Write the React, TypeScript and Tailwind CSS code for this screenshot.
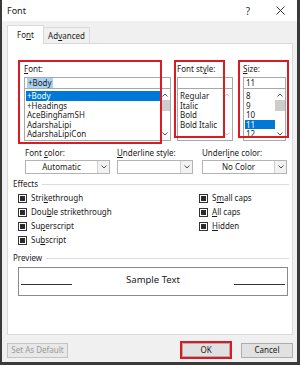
import React from "react";

const U = ({ children }: { children: React.ReactNode }) => (
  <span className="underline underline-offset-[1px] decoration-[0.5px]">{children}</span>
);

function Chev({ up, faded }: { up?: boolean; faded?: boolean }) {
  return (
    <svg width="6" height="4" viewBox="0 0 6 4" className="block">
      <polyline
        points={up ? "0.5,3.5 3,1 5.5,3.5" : "0.5,0.5 3,3 5.5,0.5"}
        fill="none"
        stroke={faded ? "#c8c8c8" : "#505050"}
        strokeWidth="1"
      />
    </svg>
  );
}

function Scroll({ thumb, faded }: { thumb?: boolean; faded?: boolean }) {
  return (
    <div className="w-[10px] h-full flex flex-col items-center justify-between py-[4px] bg-white">
      <Chev up faded={faded} />
      <div className="flex-1 w-full pt-[3px]">
        {thumb ? <div className="w-full h-[11px] bg-[#cdcdcd]" /> : null}
      </div>
      <Chev faded={faded} />
    </div>
  );
}

function Check({ children }: { children: React.ReactNode }) {
  return (
    <div className="h-[14px] flex items-center gap-[4px]">
      <div className="w-[9px] h-[9px] border border-[#333] bg-white flex items-center justify-center">
        <div className="w-[5px] h-[5px] bg-[#2a2a2a]" />
      </div>
      <span>{children}</span>
    </div>
  );
}

function Drop({ text, w }: { text: string; w: string }) {
  return (
    <div className={`${w} h-[14px] border border-[#b4b4b4] bg-white flex`}>
      <div className="flex-1 flex items-center justify-center">{text}</div>
      <div className="w-[12px] h-full border-l border-[#d0d0d0] bg-[#f2f2f2] flex items-center justify-center">
        <Chev />
      </div>
    </div>
  );
}

export default function App() {
  return (
    <div className="w-[300px] h-[365px] bg-[#f0f0f0] border-l-2 border-r-[3px] border-b-[3px] border-[#3a3a3a] flex flex-col text-[8px] leading-[10px] text-[#1a1a1a] font-['Noto_Sans',sans-serif] overflow-hidden">
      {/* title bar */}
      <div className="h-[21px] bg-white flex items-center pl-[5px] pr-[12px] shrink-0">
        <span className="text-[9px]">Font</span>
        <span className="ml-auto text-[10px] text-[#333] mr-[26px]">?</span>
        <svg width="9" height="9" viewBox="0 0 9 9">
          <path d="M0.5 0.5 L8.5 8.5 M8.5 0.5 L0.5 8.5" stroke="#333" strokeWidth="1" />
        </svg>
      </div>
      {/* tabs */}
      <div className="h-[22px] flex items-end pl-[5px] shrink-0">
        <div className="h-[19px] w-[37px] bg-white border border-b-0 border-[#d9d9d9] flex items-center justify-center relative z-10 -mb-px">
          Fo<U>n</U>t
        </div>
        <div className="h-[16px] w-[46px] bg-[#f0f0f0] border border-l-0 border-b-0 border-[#d9d9d9] flex items-center justify-center">
          Ad<U>v</U>anced
        </div>
      </div>
      {/* panel */}
      <div className="ml-[5px] w-[286px] h-[292px] bg-white border border-[#d9d9d9] relative shrink-0 pt-[20px]">
        {/* top lists */}
        <div className="flex pl-[16px]">
          <div className="w-[147px] flex flex-col">
            <div className="h-[10px]"><U>F</U>ont:</div>
            <div className="mt-[3px] h-[12px] border border-[#a8a8a8] flex items-center px-[2px]">
              <span className="bg-[#a9d1f3] px-[1px]">+Body</span>
            </div>
            <div className="h-[52px] border border-t-0 border-[#a8a8a8] flex leading-[9px]">
              <div className="flex-1 pt-[2px] pl-[1px]">
                <div className="h-[9.5px] bg-[#0078d7] text-white flex items-center px-[1px]">+Body</div>
                <div className="h-[9.5px] flex items-center px-[1px]">+Headings</div>
                <div className="h-[9.5px] flex items-center px-[1px]">AceBinghamSH</div>
                <div className="h-[9.5px] flex items-center px-[1px]">AdarshaLipi</div>
                <div className="h-[9.5px] flex items-center px-[1px]">AdarshaLipiCon</div>
              </div>
              <Scroll thumb />
            </div>
          </div>
          <div className="w-[56px] flex flex-col ml-[6px]">
            <div className="h-[10px]">Font st<U>y</U>le:</div>
            <div className="mt-[3px] h-[12px] border border-[#a8a8a8]" />
            <div className="h-[52px] border border-t-0 border-[#a8a8a8] flex leading-[9px]">
              <div className="flex-1 pt-[2px] pl-[2px]">
                <div className="h-[9.5px] flex items-center">Regular</div>
                <div className="h-[9.5px] flex items-center">Italic</div>
                <div className="h-[9.5px] flex items-center">Bold</div>
                <div className="h-[9.5px] flex items-center">Bold Italic</div>
              </div>
              <Scroll faded />
            </div>
          </div>
          <div className="w-[43px] flex flex-col ml-[10px]">
            <div className="h-[10px]"><U>S</U>ize:</div>
            <div className="mt-[3px] h-[12px] border border-[#a8a8a8] flex items-center px-[2px]">11</div>
            <div className="h-[52px] border border-t-0 border-[#a8a8a8] flex leading-[9px]">
              <div className="flex-1 pt-[2px] pl-[1px]">
                <div className="h-[9.5px] flex items-center px-[1px]">8</div>
                <div className="h-[9.5px] flex items-center px-[1px]">9</div>
                <div className="h-[9.5px] flex items-center px-[1px]">10</div>
                <div className="h-[9.5px] flex items-center px-[1px] bg-[#0078d7] text-white">11</div>
                <div className="h-[9.5px] flex items-center px-[1px]">12</div>
              </div>
              <Scroll thumb />
            </div>
          </div>
        </div>

        {/* colour row */}
        <div className="flex mt-[7px] pl-[17px]">
          <div className="flex flex-col gap-[2px] w-[85px]">
            <div>Font <U>c</U>olor:</div>
            <Drop text="Automatic" w="w-[85px]" />
          </div>
          <div className="flex flex-col gap-[2px] w-[76px] ml-[7px]">
            <div><U>U</U>nderline style:</div>
            <Drop text="" w="w-[76px]" />
          </div>
          <div className="flex flex-col gap-[2px] w-[85px] ml-[9px]">
            <div>Underl<U>i</U>ne color:</div>
            <Drop text="No Color" w="w-[85px]" />
          </div>
        </div>

        {/* effects */}
        <div className="mt-[5px] pl-[5px] pr-[3px] flex items-center h-[10px]">
          <span>Effects</span>
          <div className="flex-1 h-px bg-[#dcdcdc] ml-[4px]" />
        </div>
        <div className="mt-[2px] pl-[10px] flex">
          <div className="w-[181px] flex flex-col">
            <Check>Stri<U>k</U>ethrough</Check>
            <Check>Dou<U>b</U>le strikethrough</Check>
            <Check>Su<U>p</U>erscript</Check>
            <Check>Su<U>b</U>script</Check>
          </div>
          <div className="flex flex-col">
            <Check>S<U>m</U>all caps</Check>
            <Check><U>A</U>ll caps</Check>
            <Check><U>H</U>idden</Check>
          </div>
        </div>

        {/* preview */}
        <div className="mt-[6px] pl-[5px] pr-[3px] flex items-center h-[10px]">
          <span>Preview</span>
          <div className="flex-1 h-px bg-[#dcdcdc] ml-[4px]" />
        </div>
        <div className="mt-[4px] ml-[10px] w-[270px] h-[29px] border border-[#8a8a8a] flex items-end pb-[10px] px-[2px]">
          <div className="w-[51px] h-px bg-[#333]" />
          <div className="flex-1 text-center text-[9.5px] leading-[12px] -mb-[1px]">Sample Text</div>
          <div className="w-[51px] h-px bg-[#333]" />
        </div>

        {/* red annotation overlays */}
        <div className="absolute left-[10px] top-[16px] w-[144px] h-[84px] border-2 border-[#d91c24] pointer-events-none" />
        <div className="absolute left-[166px] top-[16px] w-[51px] h-[78px] border-2 border-[#d91c24] pointer-events-none" />
        <div className="absolute left-[230px] top-[16px] w-[51px] h-[78px] border-2 border-[#d91c24] pointer-events-none" />
      </div>

      {/* buttons */}
      <div className="mt-[6px] flex items-center pl-[5px]">
        <div className="w-[61px] h-[15px] border border-[#c4c4c4] bg-[#e8e8e8] text-[#9a9a9a] flex items-center justify-center">
          Set As Default
        </div>
        <div className="ml-[112px] w-[52px] h-[18px] border-2 border-[#d91c24] flex items-center justify-center">
          <div className="w-[48px] h-[14px] bg-[#e1e1e1] border border-[#adadad] flex items-center justify-center">OK</div>
        </div>
        <div className="ml-[9px] w-[52px] h-[15px] bg-[#e1e1e1] border border-[#adadad] flex items-center justify-center">
          Cancel
        </div>
      </div>
    </div>
  );
}
